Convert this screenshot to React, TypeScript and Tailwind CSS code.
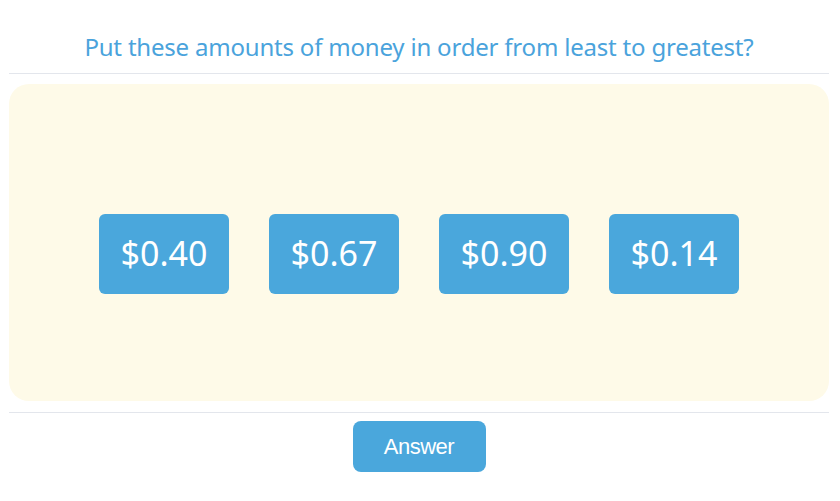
export default function App() {
  const amounts = ['$0.40', '$0.67', '$0.90', '$0.14'];

  return (
    <div className="w-[840px] h-[501px] bg-white px-[9px] pr-[11px]" style={{ fontFamily: '"Noto Sans", sans-serif' }}>
      <header className="h-[74px] flex items-end justify-center pb-[9px] border-b border-[#e3e6ec]">
        <h1 className="text-[24px] leading-[34px] text-[#4aa3dc] tracking-[-0.2px]">
          Put these amounts of money in order from least to greatest?
        </h1>
      </header>
      <div className="mt-[10px] h-[317px] rounded-[20px] bg-[#fefae8] flex items-center justify-center gap-[40px] pt-[22px]">
        {amounts.map((a) => (
          <div
            key={a}
            className="w-[130px] h-[80px] rounded-[6px] bg-[#4aa7dc] text-white text-[34px] flex items-center justify-center"
          >
            {a}
          </div>
        ))}
      </div>
      <div className="mt-[11px] border-t border-[#e3e6ec] flex justify-center pt-[8px]">
        <button
          className="w-[133px] h-[51px] rounded-[8px] bg-[#4aa7dc] text-white text-[22px] tracking-[-0.5px]"
          style={{ fontFamily: '"Liberation Sans", Arial, sans-serif' }}
        >
          Answer
        </button>
      </div>
    </div>
  );
}
